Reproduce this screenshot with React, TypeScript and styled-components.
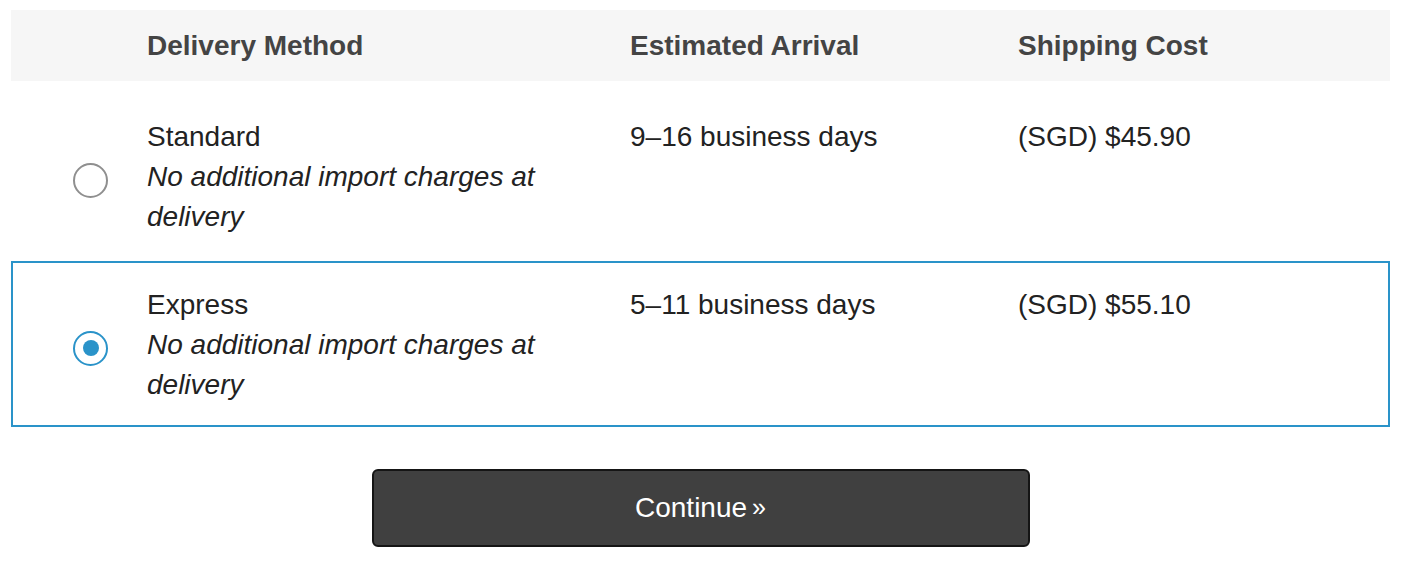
import React, { useState } from "react";
import styled, { createGlobalStyle } from "styled-components";

const Global = createGlobalStyle`
  html, body { margin: 0; padding: 0; background: #fff; }
  body { font-family: "Liberation Sans", Arial, Helvetica, sans-serif; color: #222; }
`;

const Page = styled.div`
  padding: 10px 21px 0 11px;
  display: flex;
  flex-direction: column;
`;

const HeaderRow = styled.div`
  display: grid;
  grid-template-columns: 136px 483px 388px 1fr;
  height: 71px;
  align-items: center;
  background: #f6f6f6;
  font-size: 28px;
  font-weight: 700;
  color: #444;
`;

const Body = styled.div`
  display: flex;
  flex-direction: column;
  gap: 2px;
  margin-top: 12px;
`;

const Row = styled.label<{ $selected: boolean }>`
  display: grid;
  grid-template-columns: 134px 483px 388px 1fr;
  border: 2px solid ${(p) => (p.$selected ? "#2a93c9" : "transparent")};
  padding: 22px 0 20px;
  font-size: 28px;
  line-height: 40px;
  cursor: pointer;
`;

const RadioCell = styled.div`
  display: flex;
  align-items: center;
  padding: 6px 0 0 60px;
`;

const Radio = styled.span<{ $checked: boolean }>`
  width: 35px;
  height: 35px;
  box-sizing: border-box;
  border-radius: 50%;
  border: 2px solid ${(p) => (p.$checked ? "#2a93c9" : "#8f8f8f")};
  background: #fff;
  display: flex;
  align-items: center;
  justify-content: center;
  &::after {
    content: "";
    width: 16px;
    height: 16px;
    border-radius: 50%;
    background: ${(p) => (p.$checked ? "#2a93c9" : "transparent")};
  }
`;

const MethodCell = styled.div`
  padding-right: 50px;
`;

const Note = styled.div`
  font-style: italic;
`;

const Cell = styled.div``;

const Footer = styled.div`
  display: flex;
  justify-content: center;
  margin-top: 42px;
`;

const ContinueButton = styled.button`
  width: 658px;
  height: 78px;
  background: #404040;
  border: 2px solid #151515;
  border-radius: 6px;
  color: #fff;
  font-family: "Liberation Sans", Arial, Helvetica, sans-serif;
  font-size: 28px;
  display: flex;
  align-items: center;
  justify-content: center;
  gap: 5px;
  cursor: pointer;
`;

const Chevrons = styled.span`
  font-size: 25px;
  position: relative;
  top: -1px;
`;

const options = [
  { id: "standard", name: "Standard", arrival: "9–16 business days", cost: "(SGD) $45.90" },
  { id: "express", name: "Express", arrival: "5–11 business days", cost: "(SGD) $55.10" },
];

export default function App() {
  const [selected, setSelected] = useState("express");
  return (
    <>
      <Global />
      <Page>
        <HeaderRow>
          <span />
          <span>Delivery Method</span>
          <span>Estimated Arrival</span>
          <span>Shipping Cost</span>
        </HeaderRow>
        <Body>
          {options.map((o) => (
            <Row key={o.id} $selected={selected === o.id} onClick={() => setSelected(o.id)}>
              <RadioCell>
                <Radio $checked={selected === o.id} />
              </RadioCell>
              <MethodCell>
                <div>{o.name}</div>
                <Note>No additional import charges at delivery</Note>
              </MethodCell>
              <Cell>{o.arrival}</Cell>
              <Cell>{o.cost}</Cell>
            </Row>
          ))}
        </Body>
        <Footer>
          <ContinueButton>
            Continue<Chevrons>»</Chevrons>
          </ContinueButton>
        </Footer>
      </Page>
    </>
  );
}
